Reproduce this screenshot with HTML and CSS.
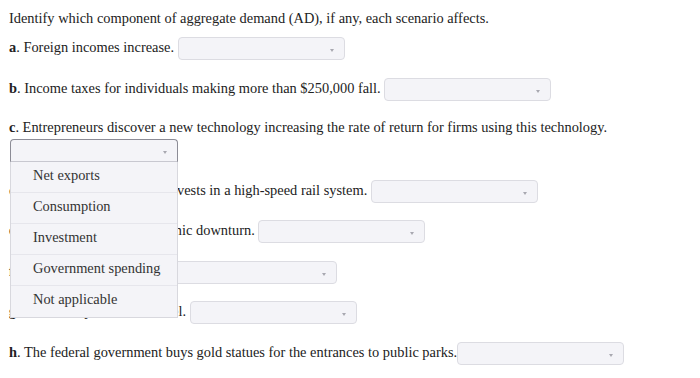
FILE: index.html
```html
<!DOCTYPE html>
<html>
<head>
  <title>Aggregate Demand</title>
  <link rel="stylesheet" href="styles.css">
</head>
<body>
  <div class="intro">Identify which component of aggregate demand (AD), if any, each scenario affects.</div>

  <div class="question"><b>a</b>. Foreign incomes increase. <span class="select"><span class="caret"></span></span></div>

  <div class="question"><b>b</b>. Income taxes for individuals making more than $250,000 fall. <span class="select"><span class="caret"></span></span></div>

  <div class="question"><b>c</b>. Entrepreneurs discover a new technology increasing the rate of return for firms using this technology.
    <div class="select-wrap">
      <span class="select open"><span class="caret"></span></span>
      <ul class="menu">
        <li>Net exports</li>
        <li>Consumption</li>
        <li>Investment</li>
        <li>Government spending</li>
        <li>Not applicable</li>
      </ul>
    </div>
  </div>

  <div class="question"><b>d</b>. The federal government invests in a high-speed rail system. <span class="select"><span class="caret"></span></span></div>

  <div class="question"><b>e</b>. Firms anticipate an economic downturn. <span class="select"><span class="caret"></span></span></div>

  <div class="question"><b>f</b>. The U.S. dollar weakens. <span class="select"><span class="caret"></span></span></div>

  <div class="question"><b>g</b>. Canada buys more US steel. <span class="select"><span class="caret"></span></span></div>

  <div class="question"><b>h</b>. The federal government buys gold statues for the entrances to public parks.<span class="select"><span class="caret"></span></span></div>
</body>
</html>
```

FILE: styles.css
```css
body {
  margin: 0;
  padding: 8px 9px;
  font-family: "Liberation Serif", "Times New Roman", serif;
  font-size: 14.4px;
  color: #222;
  background-color: #fff;
}

.intro {
  line-height: 20px;
  margin-bottom: 9px;
}

.question {
  line-height: 18px;
  margin-bottom: 17.5px;
}

.question b {
  font-weight: bold;
}

.select {
  position: relative;
  display: inline-block;
  box-sizing: border-box;
  width: 167px;
  height: 23px;
  vertical-align: middle;
  background-color: #f4f4f8;
  border: 1px solid #dcdce2;
  border-radius: 4px;
}

.caret {
  position: absolute;
  right: 10px;
  top: 11px;
  width: 0;
  height: 0;
  border-left: 2.5px solid transparent;
  border-right: 2.5px solid transparent;
  border-top: 3px solid #a8a8b0;
}

.select-wrap {
  position: relative;
  width: 168px;
  margin-top: 3px;
  margin-left: 1px;
}

.select.open {
  display: block;
  width: 168px;
  border-color: #8c8c96;
  border-bottom-color: #c8c8d0;
  border-radius: 4px 4px 0 0;
}

.menu {
  position: absolute;
  top: 23px;
  left: 0;
  z-index: 10;
  box-sizing: border-box;
  width: 168px;
  margin: 0;
  padding: 0;
  list-style: none;
  background-color: #f4f4f8;
  border: 1px solid #d8d8de;
  border-top: none;
}

.menu li {
  height: 31px;
  line-height: 26px;
  padding-left: 22px;
  color: #333;
  border-bottom: 1px solid #e6e6ec;
  box-sizing: border-box;
}

.menu li:last-child {
  border-bottom: none;
}
```
